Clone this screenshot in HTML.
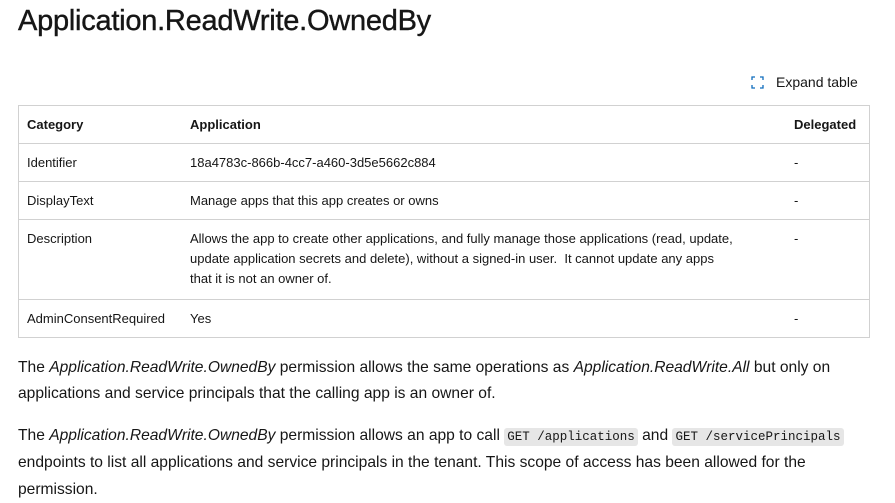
<!DOCTYPE html>
<html><head><meta charset="utf-8"><style>
body{margin:0;background:#fff;width:895px;height:499px;overflow:hidden;font-family:"Liberation Sans",sans-serif;color:#161616}
h1{position:absolute;left:18px;top:5px;margin:0;font-size:29px;font-weight:normal;letter-spacing:-0.25px;-webkit-text-stroke:0.4px #161616}
.exp{position:absolute;left:751px;top:74px;font-size:14px}
.exp svg{vertical-align:-2px;margin-right:12px}
table{position:absolute;left:18px;top:105px;width:852px;border-collapse:collapse;font-size:13px;border:1px solid #d1d1d1}
td,th{border-bottom:1px solid #d1d1d1;text-align:left;vertical-align:top;padding:9px 8px 8px 8px;line-height:20px}
th{font-weight:bold}
.c1{width:147px}.c2{width:588px}
p{position:absolute;left:18px;margin:0;font-size:15.6px;line-height:26px;width:850px}
code{font-family:"Liberation Mono",monospace;font-size:12.5px;line-height:16px;background:#e6e6e6;border-radius:3px;padding:1px 3px;display:inline-block}
</style></head><body>
<h1>Application.ReadWrite.OwnedBy</h1>
<div class="exp"><svg width="13" height="13" viewBox="0 0 13 13" fill="none" stroke="#0f6cbd" stroke-width="1.3"><path d="M1 4V1h3M9 1h3v3M12 9v3H9M4 12H1V9"/></svg>Expand table</div>
<table>
<tr><th class="c1">Category</th><th class="c2">Application</th><th>Delegated</th></tr>
<tr><td>Identifier</td><td>18a4783c-866b-4cc7-a460-3d5e5662c884</td><td>-</td></tr>
<tr><td>DisplayText</td><td>Manage apps that this app creates or owns</td><td>-</td></tr>
<tr><td style="padding-bottom:10px">Description</td><td style="padding-bottom:10px">Allows the app to create other applications, and fully manage those applications (read, update,<br>update application secrets and delete), without a signed-in user.&nbsp; It cannot update any apps<br>that it is not an owner of.</td><td style="padding-bottom:10px">-</td></tr>
<tr><td>AdminConsentRequired</td><td>Yes</td><td>-</td></tr>
</table>
<p style="top:355px">The <i>Application.ReadWrite.OwnedBy</i> permission allows the same operations as <i>Application.ReadWrite.All</i> but only on applications and service principals that the calling app is an owner of.</p>
<p style="top:422px;line-height:27px">The <i>Application.ReadWrite.OwnedBy</i> permission allows an app to call <code>GET /applications</code> and <code>GET /servicePrincipals</code> endpoints to list all applications and service principals in the tenant. This scope of access has been allowed for the permission.</p>
</body></html>
